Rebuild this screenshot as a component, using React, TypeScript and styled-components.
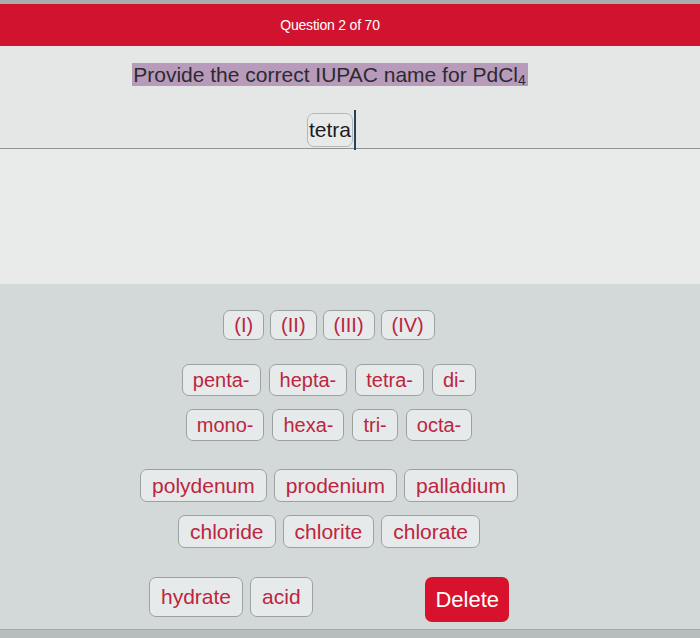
import React from "react";
import styled, { createGlobalStyle } from "styled-components";

const Global = createGlobalStyle`
  html, body { margin: 0; padding: 0; }
  body {
    background: #d4dada;
    font-family: "Liberation Sans", Arial, sans-serif;
    width: 700px;
    height: 638px;
    overflow: hidden;
  }
`;

const Page = styled.div`
  display: flex;
  flex-direction: column;
  width: 700px;
  height: 638px;
`;

const TopEdge = styled.div`
  height: 4px;
  background: #a9acad;
`;

const Header = styled.header`
  height: 42px;
  background: #d1132f;
  display: flex;
  align-items: center;
  justify-content: center;
  padding-right: 40px;
  color: #ffffff;
  font-size: 14px;
  letter-spacing: -0.2px;
`;

const QuestionArea = styled.section`
  height: 102px;
  background: #e4e7e6;
  border-bottom: 1px solid #8e9495;
  display: flex;
  flex-direction: column;
  align-items: center;
  padding: 16px 40px 0 0;
  box-sizing: border-box;
  height: 103px;
`;

const Prompt = styled.div`
  font-size: 21px;
  line-height: 26px;
  color: #2b2b2e;
`;

const Highlight = styled.span`
  background: #b89bbb;
  padding: 0 2px 0 1px;
`;

const Sub = styled.sub`
  font-size: 14px;
  vertical-align: -3px;
  line-height: 0;
`;

const AnswerWrap = styled.div`
  position: relative;
  margin-top: 25px;
`;

const AnswerBox = styled.div`
  height: 34px;
  box-sizing: border-box;
  padding: 0 1px;
  border: 1px solid #b3b8b8;
  border-radius: 7px;
  font-size: 21px;
  line-height: 32px;
  color: #1c1c1e;
  background: #e7eae9;
`;

const Caret = styled.span`
  position: absolute;
  right: -3px;
  top: -3px;
  width: 2px;
  height: 40px;
  background: #26415e;
`;

const BlankArea = styled.section`
  height: 135px;
  background: #e9ebea;
`;

const Bank = styled.section`
  flex: 1;
  background: #d3d9d9;
  display: flex;
  flex-direction: column;
  align-items: center;
  padding: 26px 42px 0 0;
  box-sizing: border-box;
`;

const Block = styled.div<{ $top?: number }>`
  display: flex;
  flex-direction: column;
  align-items: center;
  gap: 13px;
  margin-top: ${(p) => p.$top ?? 0}px;
`;

const Row = styled.div<{ $gap: number }>`
  display: flex;
  gap: ${(p) => p.$gap}px;
`;

type Size = "xs" | "sm" | "md" | "lg";
const sizes: Record<Size, { font: number; lh: number; py: number; px: number }> = {
  xs: { font: 20, lh: 24, py: 2, px: 10 },
  sm: { font: 20, lh: 24, py: 3, px: 10 },
  md: { font: 21, lh: 25, py: 3, px: 11 },
  lg: { font: 21, lh: 26, py: 6, px: 11 },
};

const Chip = styled.button<{ $size: Size }>`
  font-family: "Liberation Sans", Arial, sans-serif;
  font-size: ${(p) => sizes[p.$size].font}px;
  line-height: ${(p) => sizes[p.$size].lh}px;
  padding: ${(p) => `${sizes[p.$size].py}px ${sizes[p.$size].px}px`};
  color: #bd2540;
  background: #e7eaea;
  border: 1px solid #9ba2a2;
  border-radius: 7px;
  margin: 0;
  cursor: pointer;
`;

const LastRow = styled.div`
  width: 360px;
  display: flex;
  justify-content: space-between;
  align-items: flex-start;
  margin-top: 29px;
`;

const DeleteButton = styled.button`
  font-family: "Liberation Sans", Arial, sans-serif;
  font-size: 22px;
  line-height: 25px;
  padding: 10px 10px;
  color: #ffffff;
  background: #d8112c;
  border: none;
  border-radius: 7px;
  margin: 0;
  cursor: pointer;
`;

const BottomEdge = styled.div`
  height: 9px;
  background: #b7bdbe;
  border-top: 1px solid #a3a9aa;
  box-sizing: border-box;
`;

const numerals = ["(I)", "(II)", "(III)", "(IV)"];
const prefixA = ["penta-", "hepta-", "tetra-", "di-"];
const prefixB = ["mono-", "hexa-", "tri-", "octa-"];
const metals = ["polydenum", "prodenium", "palladium"];
const anions = ["chloride", "chlorite", "chlorate"];

export default function App() {
  return (
    <>
      <Global />
      <Page>
        <TopEdge />
        <Header>Question 2 of 70</Header>
        <QuestionArea>
          <Prompt>
            <Highlight>
              Provide the correct IUPAC name for PdCl<Sub>4</Sub>
            </Highlight>
          </Prompt>
          <AnswerWrap>
            <AnswerBox>tetra</AnswerBox>
            <Caret />
          </AnswerWrap>
        </QuestionArea>
        <BlankArea />
        <Bank>
          <Row $gap={6}>
            {numerals.map((t) => (
              <Chip key={t} $size="xs">{t}</Chip>
            ))}
          </Row>
          <Block $top={24}>
            <Row $gap={8}>
              {prefixA.map((t) => (
                <Chip key={t} $size="sm">{t}</Chip>
              ))}
            </Row>
            <Row $gap={8}>
              {prefixB.map((t) => (
                <Chip key={t} $size="sm">{t}</Chip>
              ))}
            </Row>
          </Block>
          <Block $top={28}>
            <Row $gap={7}>
              {metals.map((t) => (
                <Chip key={t} $size="md">{t}</Chip>
              ))}
            </Row>
            <Row $gap={7}>
              {anions.map((t) => (
                <Chip key={t} $size="md">{t}</Chip>
              ))}
            </Row>
          </Block>
          <LastRow>
            <Row $gap={7}>
              <Chip $size="lg">hydrate</Chip>
              <Chip $size="lg">acid</Chip>
            </Row>
            <DeleteButton>Delete</DeleteButton>
          </LastRow>
        </Bank>
        <BottomEdge />
      </Page>
    </>
  );
}
